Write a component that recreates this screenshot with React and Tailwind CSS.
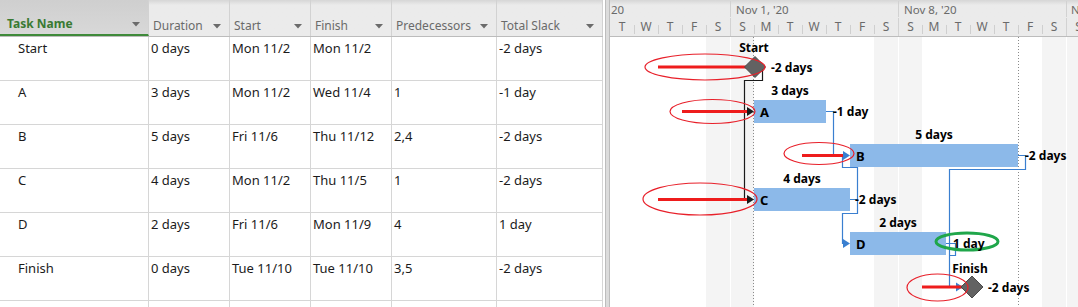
import React from "react";

const columns = [
  { label: "Task Name", w: "w-[149px]", active: true },
  { label: "Duration", w: "w-[81px]" },
  { label: "Start", w: "w-[81px]" },
  { label: "Finish", w: "w-[81px]" },
  { label: "Predecessors", w: "w-[105px]" },
  { label: "Total Slack", w: "w-[106px]" },
];

const tasks = [
  ["Start", "0 days", "Mon 11/2", "Mon 11/2", "", "-2 days"],
  ["A", "3 days", "Mon 11/2", "Wed 11/4", "1", "-1 day"],
  ["B", "5 days", "Fri 11/6", "Thu 11/12", "2,4", "-2 days"],
  ["C", "4 days", "Mon 11/2", "Thu 11/5", "1", "-2 days"],
  ["D", "2 days", "Fri 11/6", "Mon 11/9", "4", "1 day"],
  ["Finish", "0 days", "Tue 11/10", "Tue 11/10", "3,5", "-2 days"],
  ["", "", "", "", "", ""],
];

const days = ["T", "W", "T", "F", "S", "S", "M", "T", "W", "T", "F", "S", "S", "M", "T", "W", "T", "F", "S", "S"];

function Caret() {
  return (
    <svg width="8" height="5" viewBox="0 0 8 5" className="shrink-0">
      <path d="M0 0 L8 0 L4 4.5 Z" fill="#6b6b6b" />
    </svg>
  );
}

function Arrow({ x, y, color }) {
  return <path d={`M${x} ${y} L${x - 7} ${y - 4.5} L${x - 7} ${y + 4.5} Z`} fill={color} />;
}

function Diamond({ cx, cy, r }) {
  return (
    <path
      d={`M${cx} ${cy - r} L${cx + r} ${cy} L${cx} ${cy + r} L${cx - r} ${cy} Z`}
      fill="#626262"
      stroke="#4a4a4a"
      strokeWidth="1"
    />
  );
}

function GanttBody() {
  const blue = "#3a7fd0";
  const bars = [
    { x: 144, w: 72, top: 63, name: "A", dur: "3 days" },
    { x: 240, w: 168, top: 107, name: "B", dur: "5 days" },
    { x: 144, w: 96, top: 151, name: "C", dur: "4 days" },
    { x: 240, w: 96, top: 195, name: "D", dur: "2 days" },
  ];
  return (
    <svg width="468" height="270" viewBox="0 0 468 270" className="block shrink-0">
      {/* weekends */}
      {[96, 264, 432].map((x) => (
        <g key={x}>
          <rect x={x} y="0" width="48" height="270" fill="#f4f4f4" />
          <line x1={x + 24.5} y1="0" x2={x + 24.5} y2="270" stroke="#ffffff" strokeWidth="1" />
        </g>
      ))}
      {/* dotted markers */}
      <line x1="143.5" y1="0" x2="143.5" y2="270" stroke="#8a8a8a" strokeWidth="1" strokeDasharray="1 2" />
      <line x1="408.5" y1="0" x2="408.5" y2="270" stroke="#8a8a8a" strokeWidth="1" strokeDasharray="1 2" />

      {/* bars */}
      {bars.map((b) => (
        <g key={b.name} fontFamily="'Noto Sans', sans-serif" fontWeight="700">
          <rect x={b.x} y={b.top} width={b.w} height="23" fill="#8cb9e9" />
          <text x={b.x + b.w / 2} y={b.top - 5} fontSize="12" textAnchor="middle" fill="#000">
            {b.dur}
          </text>
          <text x={b.x + 6} y={b.top + 16.5} fontSize="13" fill="#000">
            {b.name}
          </text>
        </g>
      ))}

      {/* black links from Start */}
      <g stroke="#1a1a1a" strokeWidth="1.2" fill="none">
        <path d="M155 30 H152.5 V43.5 H134.5 V162.5 H138" />
        <path d="M134.5 74.5 H138" />
      </g>
      <Arrow x={144} y={74.5} color="#1a1a1a" />
      <Arrow x={144} y={162.5} color="#1a1a1a" />

      {/* blue links */}
      <g stroke={blue} strokeWidth="1.2" fill="none">
        <path d="M216 74.5 H223.5 V118.5 H234" />
        <path d="M240 162.5 H247.5 V130.5 H232.5 V118.5 H234" />
        <path d="M247.5 162.5 V176.5 H232.5 V206.5 H234" />
        <path d="M408 118.5 H415.5 V132.5 H339.5 V250 H347" />
        <path d="M336 206.5 H345.5 V218.5 H339.5" />
      </g>
      <Arrow x={240} y={118.5} color={blue} />
      <Arrow x={240} y={206.5} color={blue} />
      <Arrow x={353} y={250} color={blue} />

      {/* red annotations */}
      <g stroke="#ee1c1c" strokeWidth="3">
        <line x1="48" y1="30" x2="144" y2="30" />
        <line x1="72" y1="74.5" x2="137" y2="74.5" />
        <line x1="192" y1="118.5" x2="233" y2="118.5" />
        <line x1="48" y1="162.5" x2="137" y2="162.5" />
        <line x1="312" y1="250" x2="360" y2="250" />
      </g>

      {/* milestones */}
      <Diamond cx={145} cy={30} r={10.5} />
      <Diamond cx={362} cy={250} r={11} />

      <g stroke="#e8202a" strokeWidth="1.2" fill="none">
        <ellipse cx="95" cy="30" rx="60" ry="13" />
        <ellipse cx="102.5" cy="74.5" rx="42.5" ry="12" />
        <ellipse cx="209" cy="116.5" rx="35" ry="11" />
        <ellipse cx="90" cy="162" rx="57" ry="16" />
        <ellipse cx="327.5" cy="250.5" rx="30.5" ry="13.5" />
      </g>
      <ellipse cx="357" cy="204.5" rx="31" ry="8.5" stroke="#1fa64a" strokeWidth="3" fill="none" />

      {/* labels */}
      <g fontFamily="'Noto Sans', sans-serif" fontWeight="700" fontSize="12" fill="#000">
        <text x="144" y="15" textAnchor="middle">Start</text>
        <text x="161" y="34.5">-2 days</text>
        <text x="223" y="79">-1 day</text>
        <text x="415" y="123">-2 days</text>
        <text x="245" y="167">-2 days</text>
        <text x="343" y="211">1 day</text>
        <text x="360" y="235.5" textAnchor="middle">Finish</text>
        <text x="378" y="254.5">-2 days</text>
      </g>
    </svg>
  );
}

export default function App() {
  return (
    <div className="flex w-[1078px] h-[307px] overflow-hidden bg-white font-['Noto_Sans',sans-serif]">
      {/* Table */}
      <div className="flex flex-col w-[603px] shrink-0 overflow-hidden">
        <div className="flex h-[37px] shrink-0 bg-linear-to-b from-[#d6d6d6] to-[#ebebeb] to-[14%] border-b border-[#bcbcbc]">
          {columns.map((c) => (
            <div
              key={c.label}
              className={`${c.w} shrink-0 flex items-end justify-between pl-[4px] pr-[8px] border-r border-[#d2d2d2] ${
                c.active ? "bg-linear-to-b from-[#cfcfcf] to-[#d8d8d8] border-b-2 border-b-[#3f8a3a]" : ""
              }`}
            >
              <span
                className={`text-[12px] leading-[20px] ${
                  c.active ? "font-bold text-[#3a7a33] pl-[3px]" : "text-[#6a6a6a]"
                }`}
              >
                {c.label}
              </span>
              <span className="pb-[7px]">
                <Caret />
              </span>
            </div>
          ))}
        </div>
        {tasks.map((row, i) => (
          <div key={i} className="flex h-[44px] shrink-0 border-b border-[#d6d6d6]">
            {row.map((cell, j) => (
              <div
                key={j}
                className={`${columns[j].w} shrink-0 border-r border-[#d6d6d6] pt-[1px] text-[13px] leading-[20px] text-[#1b1b1b] ${
                  j === 0 ? "pl-[18px]" : "pl-[2px]"
                }`}
              >
                {cell}
              </div>
            ))}
          </div>
        ))}
      </div>

      {/* splitter */}
      <div className="w-[2px] shrink-0 bg-white" />
      <div className="w-[5px] shrink-0 bg-[#dcdcdc] border-x border-[#bdbdbd]" />

      {/* Gantt */}
      <div className="flex flex-col flex-1 overflow-hidden">
        <div className="h-[37px] shrink-0 bg-[#ebebeb] bg-linear-to-b from-[#d6d6d6] to-[#ebebeb] to-[14%] border-b border-[#bcbcbc] overflow-hidden">
          <div className="flex h-[17px] pt-[1px]">
            <div className="w-[120px] shrink-0 text-[11.5px] leading-[18px] text-[#6a6a6a] pl-[1px]">20</div>
            <div className="w-[168px] shrink-0 border-l border-[#d2d2d2] text-[11.5px] leading-[18px] text-[#6a6a6a] pl-[5px]">
              Nov 1, '20
            </div>
            <div className="w-[168px] shrink-0 border-l border-[#d2d2d2] text-[11.5px] leading-[18px] text-[#6a6a6a] pl-[5px]">
              Nov 8, '20
            </div>
            <div className="w-[168px] shrink-0 border-l border-[#d2d2d2] text-[11.5px] leading-[18px] text-[#6a6a6a] pl-[4px]">
              Nov 15, '20
            </div>
          </div>
          <div className="flex h-[19px] pt-[1px]">
            {days.map((d, i) => (
              <div
                key={i}
                className={`relative w-[24px] shrink-0 flex justify-center text-[12px] leading-[18px] text-[#6a6a6a] ${
                  i % 7 === 5 ? "border-l border-[#d2d2d2]" : ""
                }`}
              >
                {i % 7 !== 5 && i !== 0 && (
                  <span className="absolute left-0 top-[7px] h-[9px] w-px bg-[#cfcfcf]" />
                )}
                {d}
              </div>
            ))}
          </div>
        </div>
        <GanttBody />
      </div>
    </div>
  );
}
